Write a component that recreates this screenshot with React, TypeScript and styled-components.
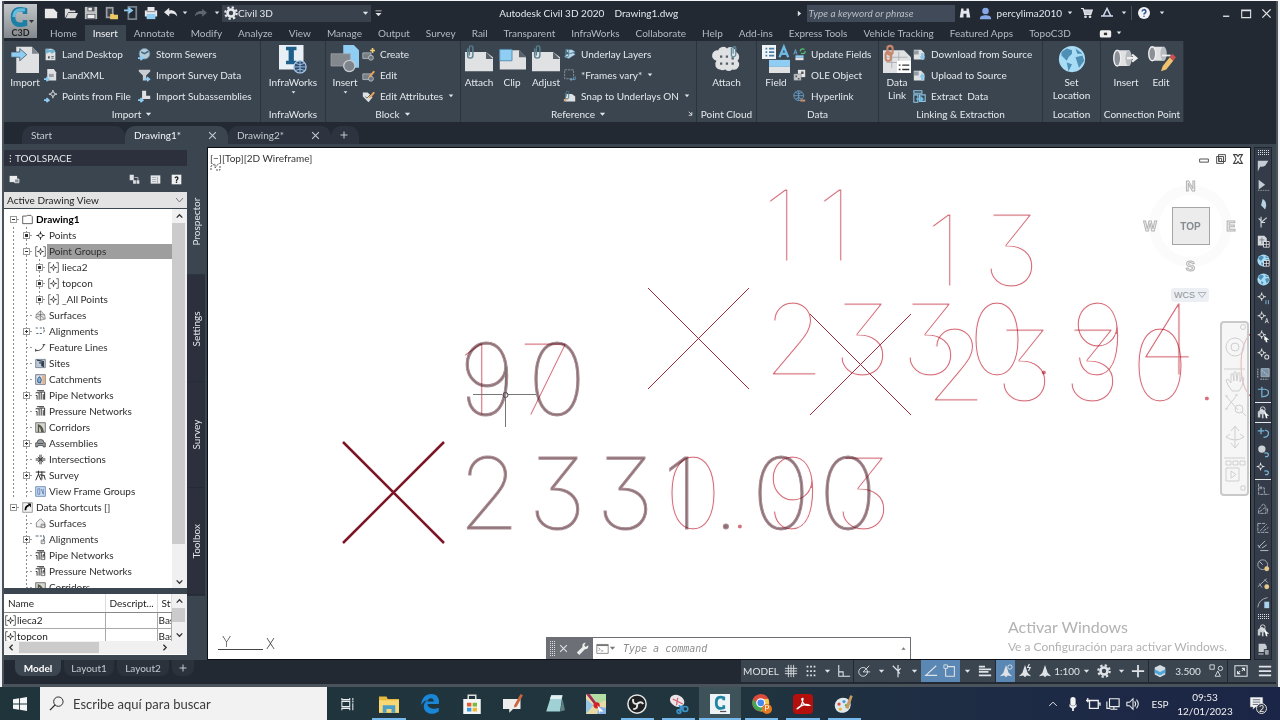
import React from "react";
import styled, { createGlobalStyle, css } from "styled-components";

const C = {
  dark: "#222933",
  panel: "#3b4550",
  edge: "#2b333d",
  text: "#e4e8ec",
  dim: "#b4bac2",
  blue: "#8fcdf2",
  light: "#dfe1e3",
};
const UI = `Lato, "Open Sans", sans-serif`;

const Global = createGlobalStyle`
  * { box-sizing: border-box; }
  body { margin: 0; background: #f2f4f6; font-family: ${UI}; font-size: 10px; line-height: 12px; color: ${C.text}; }
  button, input, select { font: inherit; color: inherit; margin: 0; padding: 0; border: 0; background: none; border-radius: 0; }
  button { display: flex; align-items: center; justify-content: center; white-space: nowrap; }
  svg { display: block; flex: none; overflow: visible; }
  ul { list-style: none; margin: 0; padding: 0; }
  h1, h2 { margin: 0; font-size: 10px; font-weight: 400; }
`;

/* ---------- icons ---------- */

const page = <path d="M2 1h8l4 4v10H2z" fill={C.light} />;
const clip = <path d="M3 4v5a2 2 0 0 0 4 0V3a1.500 1.500 0 0 0-3 0v5" fill="none" stroke="#4f7888" strokeWidth="1.200" />;
const arrowIn = <path d="M0 12.500h5M3 10l3 2.500-3 2.500" fill="none" stroke={C.blue} strokeWidth="2" />;
const pencil = <path d="M9 8l5-6 2 1.500-5 6-3 1z" fill="#e8a45c" />;
const pointMark = (
  <g fill="none" stroke="currentColor">
    <circle cx="8" cy="8" r="3" />
    <path d="M8 2v4M8 10v4M2 8h4M10 8h4" strokeWidth="1.500" />
  </g>
);
const brackets = <path d="M4 1H1v14h3M12 1h3v14h-3" fill="none" stroke="currentColor" />;
const link = <path d="M9 9h5v5H9zM10 12l3-2" fill="#fff" stroke="#333" strokeWidth=".8" />;
const pipes = <path d="M1 4h5v10M1 8h2v6M6 3h3v11M9 3h5v11M12 6v8M3 1h10" fill="none" stroke="currentColor" strokeWidth="1.400" />;
const globe = (
  <g>
    <circle cx="8" cy="8" r="7.500" fill="#a8dcf5" />
    <path d="M2 4l3-2 3 1 0 2-2 2-1 2-3-3zM10 7l4-1 1 3-3 4-1-3zM10 2l4 3-3 0zM5 10l3 1-2 4z" fill="#4d8fb5" />
  </g>
);
const peak = <path d="M8 1l3 9 4 4-5-1-2 2-2-2-5 1 4-4z" fill="currentColor" />;

const art: Record<string, React.ReactNode> = {
  new: <path d="M1 3h10l4 4v7H1z" fill="#e8e8e8" />,
  open: <path d="M1 14V3h5l1 2h6v2H5zM5 8h11l-3 6H2z" fill="#dcdcdc" />,
  save: <g><path d="M1 1h14v14H1z" fill="#bfc0c0" /><path d="M4 1h8v5H4zM3 9h10v6H3z" fill="#50565e" /><path d="M5 2h4v3H5zM4 10h8v4H4z" fill="#eee" /></g>,
  saveAs: <g><path d="M2 1h9v13H2z" fill="#9b9ea2" /><path d="M4 3h5v9H4z" fill="#3b4148" /><path d="M7 9h4l1 1h4v5H7z" fill="#ecc765" /></g>,
  web: <g><path d="M5 1h9v14H5z" fill="none" stroke="#77848f" strokeWidth="2" /><path d="M0 5h7M5 2l4 3-4 3" fill="none" stroke={C.blue} strokeWidth="2" /></g>,
  print: <g><path d="M4 1h8v4H4zM1 5h14v7H1z" fill="#e9e9e9" /><path d="M3 9h10v6H3z" fill={C.blue} /><path d="M3 6h10v1H3z" fill="#7b8188" /></g>,
  undo: <path d="M6 2L0 7l6 5V9c4-1 7 0 9 3 0-5-4-8-9-7z" fill="#e5e7ea" />,
  redo: <path d="M10 2l6 5-6 5V9C6 8 3 9 1 12c0-5 4-8 9-7z" fill="#5d6670" />,
  gear: (
    <g fill="none" stroke="currentColor">
      <circle cx="8" cy="8" r="4" strokeWidth="3" />
      <circle cx="8" cy="8" r="6.500" strokeWidth="2.500" strokeDasharray="2.600 2.500" />
    </g>
  ),
  down: <path d="M2 4h12l-6 7z" fill="currentColor" />,
  right: <path d="M5 3v10l6-5z" fill="currentColor" />,
  up: <path d="M3 11h10L8 5z" fill="currentColor" />,
  downBar: <path d="M1 1h14v2H1zM1 7h14l-7 7z" fill="currentColor" />,
  binoc: <path d="M3 2h3v3h4V2h3l2 12h-5V9H6v5H1z" fill="#e3e6ea" />,
  user: <g fill="#86a8e8"><circle cx="8" cy="5" r="4" /><path d="M1 15c0-4 3-5 7-5s7 1 7 5z" /></g>,
  cart: <g fill="none" stroke="#e3e6ea" strokeWidth="1.600"><path d="M0 2h3l2 8h8l2-6H4" fill="#c9ced6" /><circle cx="6" cy="13" r="1" /><circle cx="12" cy="13" r="1" /></g>,
  tri: <path d="M8 2L3 12h10z M0 12h16" fill="none" stroke="#cfd9f0" strokeWidth="2" />,
  help: <g><circle cx="8" cy="8" r="8" fill="#f0f2f5" /><path d="M5.500 6a2.500 2.500 0 1 1 3.500 2.300c-1 .5-1 1-1 1.700M8 11.500v1.500" fill="none" stroke="#2f4f8f" strokeWidth="2" /></g>,
  min: <path d="M3 12h9" stroke="currentColor" strokeWidth="2" />,
  max: <path d="M1 3h13v11H1zM1 4h13" fill="none" stroke="currentColor" strokeWidth="1.600" />,
  close: <path d="M2 2l12 12M14 2L2 14" stroke="currentColor" strokeWidth="2" />,
  camera: <g><rect x="1" y="4" width="14" height="9" rx="2" fill="#eee" /><path d="M6 7h4v3H6z" fill="#333" /></g>,
  plus: <path d="M8 1v14M1 8h14" stroke="currentColor" strokeWidth="2" />,

  bigImport: <g><path d="M3 1h9l4 4v11H3z" fill={C.light} /><path d="M12 1v4h4" fill="#7d858d" /><path d="M0 4h5V2l4 3.500L5 9V7H0z" fill={C.blue} stroke="#3b4550" strokeWidth=".4" /></g>,
  landDesktop: <g>{page}<path d="M2 2c2-3 4 1 6 0s5-1 6 2l-4 3-3-2-4 2z" fill="#6fb3d3" /><path d="M5 10h2v3H5zM9 10h3v1H9zM9 12h3v1H9z" fill="#4a525a" /></g>,
  landXml: <g><path d="M4 0h8l3 4v10H4z" fill={C.light} /><path d="M6 6h6v4H6z" fill="#9aa1a8" />{arrowIn}</g>,
  pointsFile: <g><path d="M11 0v10M6 5h10" stroke={C.light} strokeWidth="1.500" /><circle cx="11" cy="5" r="2.500" fill="#4a525a" stroke={C.light} />{arrowIn}</g>,
  storm: <g><circle cx="8" cy="7" r="6.500" fill="#b5cbd8" stroke="#6b94ab" /><path d="M4 5l4 2 5-3" stroke="#466b82" fill="none" strokeWidth="2" />{arrowIn}</g>,
  survey: <g><path d="M1 1h14v2L10 8v6H6V8L1 3z" fill="#c9ccd0" /><path d="M8 12.500h5M11 10l3 2.500-3 2.500" fill="none" stroke={C.blue} strokeWidth="2" /></g>,
  subasm: <g><path d="M5 1h5v6h5v4H5z" fill={C.light} />{arrowIn}</g>,
  infra: <g><path d="M0 0h14v14H0z" fill="#e8f0f6" /><path d="M4 1h6v2H8.500v6H10v2H4V9h1.500V3H4z" fill="#1f5f8c" /><circle cx="12" cy="12.500" r="3.500" fill="#2d4d70" stroke="#a9c6e4" strokeWidth=".7" /><path d="M8.500 12.500h7M12 9v7M9.500 10.500q2.500 1.500 5 0M9.500 14.500q2.500-1.500 5 0" stroke="#a9c6e4" strokeWidth=".5" fill="none" /></g>,
  bigInsert: <g><path d="M7 0h6l3 3v10H7z" fill={C.blue} /><path d="M0 5h11v7H0z" fill="#82888e" stroke="#a2a8ae" strokeWidth=".4" /><circle cx="10.500" cy="12" r="3.200" fill="#7d848b" stroke="#c9cdd2" strokeWidth=".7" /></g>,
  create: <g><path d="M1 6h10v7H1z" fill="#777e86" stroke="#b6bcc2" /><circle cx="11" cy="12" r="3" fill="#6d747c" stroke="#c3c8ce" /><path d="M13 0v6M10 3h6" stroke="#f3cf74" strokeWidth="2" /></g>,
  edit: <g><path d="M1 6h10v7H1z" fill="#777e86" stroke="#b6bcc2" /><circle cx="11" cy="12" r="3" fill="#6d747c" stroke="#c3c8ce" />{pencil}</g>,
  attrs: <g><path d="M1 3h6l6 6-5 6-7-7z" fill={C.light} />{pencil}<path d="M4 8l2 2 4-4" stroke="#555" fill="none" /></g>,
  attach: <g><path d="M0 4h12l4 3v8H0z" fill={C.light} /><path d="M12 4v4h4" fill="#59616a" /><path d="M1.500 2v4a1.500 1.500 0 0 0 3 0V1.500a1 1 0 0 0-2 0V6" fill="none" stroke="#587f8e" strokeWidth=".8" /></g>,
  clipRef: <g><path d="M1 3h11l4 4v7H1z" fill={C.light} /><path d="M12 3v4h4" fill="#59616a" /><path d="M1 2.500h7v6.500H1z" fill={C.blue} stroke="#4f88ad" strokeWidth=".5" /></g>,
  under: <g><path d="M3 2h8l4 3-8 2zM3 8l10-2 2 2-8 5-5-2z" fill="#b9d9ec" stroke="#5b88a5" strokeWidth=".5" />{clip}</g>,
  frames: <g fill="none"><path d="M2 1h11v11H2z" stroke="#929aa3" strokeDasharray="3 1" /><path d="M8 13h7v-4M10 15v-4" stroke="#6da8cc" /></g>,
  snap: <g><path d="M3 5h8l4 3v6H3z" fill={C.light} />{clip}<path d="M1 11h3v3H1z" fill="#d5a878" /></g>,
  cloud: <g><path d="M4 14a3 3 0 0 1-2-5 3 3 0 0 1 1-6 3 3 0 0 1 5-1 3 3 0 0 1 5 2 3 3 0 0 1 1 5 3 3 0 0 1-3 5 3 3 0 0 1-4 0 3 3 0 0 1-3 0z" fill={C.light} /><g fill="#555c63"><path d="M4 6h1.300v1.300H4zM7.300 6h1.300v1.300H7.300zM10.600 7h1.300v1.300h-1.300zM4 10h1.300v1.300H4zM7.300 10h1.300v1.300H7.300zM10.600 10h1.300v1.300h-1.300z" /></g><path d="M10.500 1.500v4a1.200 1.200 0 0 0 2.500 0V1.500a.8.8 0 0 0-1.500 0V5" stroke="#5f8b9c" strokeWidth=".7" fill="none" /></g>,
  field: <g><path d="M0 0h8v8H0z" fill="#f2f5f8" /><path d="M2 2h1M4 2h3M2 4h1M4 4h3M2 6h1M4 6h3" stroke="#4b7fa5" /><path d="M10 7l2.500-6L15 7M11 5h3" stroke="#6eb9e4" strokeWidth="1.300" fill="none" /><path d="M4 8.500h12v4H4z" fill={C.blue} /><path d="M4 12.500h12V16H4z" fill={C.light} /></g>,
  update: <g><path d="M1 8l2-6 2 6M2 6h2" stroke="#6eb9e4" fill="none" /><path d="M3 9h10v3H3z" fill={C.blue} /><path d="M3 12h10v3H3z" fill={C.light} /><circle cx="12" cy="4" r="3" fill="none" stroke="#52c06c" strokeWidth="1.500" strokeDasharray="7 2" /></g>,
  ole: <g><path d="M6 1h9v9H6z" fill="#e5e5e5" /><path d="M1 6h9v8H1z" fill="#c4c7cb" stroke="#666" strokeWidth=".5" /><path d="M3 8h2v2H3zM6 11h2v2H6zM10 3h3v3h-3z" fill="#555" /></g>,
  hyper: <g fill="none"><circle cx="7" cy="7" r="6" stroke="#6fa8d3" /><path d="M1 7h12M7 1v12M3 3q4 3 8 0M3 11q4-3 8 0" stroke="#6fa8d3" /><path d="M9 13h6" stroke="#c88f68" strokeWidth="2.500" /></g>,
  dataLink: <g><path d="M0 3h12l4 4v9H0z" fill={C.light} /><path d="M2 7h12M2 10h12M5 4v9M9 4v9" stroke="#a9adb2" strokeWidth=".5" /><rect x="2.500" y=".5" width="3" height="5" rx="1.500" fill="none" stroke="#c9856a" strokeWidth="1.200" /><rect x="1.500" y="4" width="3" height="5" rx="1.500" fill="none" stroke="#c9856a" strokeWidth="1.200" /><path d="M8 9h8v7H8z" fill="#fff" /><path d="M9 11.500h1M11 11.500h4M9 14h1M11 14h4" stroke="#333" strokeWidth=".8" /></g>,
  download: <g><path d="M1 2h9l4 4v8H1z" fill={C.light} /><path d="M1 3h6v5H1z" fill="#959da5" /><path d="M10 6h3v4h2l-3.500 5L8 10h2z" fill="#86c6ec" /></g>,
  upload: <g><path d="M1 2h9l4 4v8H1z" fill={C.light} /><path d="M1 3h6v5H1z" fill="#959da5" /><path d="M10 14h3v-4h2l-3.500-5L8 10h2z" fill="#86c6ec" /></g>,
  extract: <g><path d="M1 1h10v3H1zM1 6h5v9H1zM8 6h7v8H8z" fill="none" stroke="#8fc7e5" strokeWidth="1.300" /><path d="M4 11h7M9 8l3 3-3 3" stroke="#70bfe8" strokeWidth="2" fill="none" /></g>,
  globe,
  pipeIn: <g><path d="M3 3h7v9H3z" fill={C.light} /><ellipse cx="3" cy="7.500" rx="2" ry="4.500" fill="#8b9096" stroke="#eee" strokeWidth=".8" /><ellipse cx="9.500" cy="7.500" rx="1.800" ry="4.500" fill="#b8bbbf" /><path d="M8.500 7.500h5M11.500 5.500l2.500 2-2.500 2" stroke="#eee" fill="none" strokeWidth="1.200" /></g>,
  pipeEdit: <g><path d="M3 1h7v8H3z" fill={C.light} /><ellipse cx="3" cy="5" rx="2" ry="4" fill="#8b9096" stroke="#eee" strokeWidth=".8" /><ellipse cx="9.500" cy="5" rx="1.800" ry="4" fill="#b8bbbf" /><path d="M8.500 6h5" stroke="#eee" /><path d="M9 12l4-5 2 2-4 5-3 1z" fill="#f0c270" /><path d="M13 7l1.500-2 2 2L15 9z" fill="#d05050" /></g>,
  launcher: <path d="M4 4l7 7M11 5v7H4" stroke="currentColor" fill="none" strokeWidth="2" />,

  tsNew: <g><path d="M1 3h12v10H1z" fill="#e9ecef" /><path d="M9 8h7v6H9z" fill="#8e959d" stroke="#fff" /></g>,
  tsPan: <g fill="#dfe3e7"><path d="M1 1h6v8H1zM6 9h4v5H6zM11 9h4v5h-4z" /><path d="M8 5h5v4" stroke="#dfe3e7" fill="none" /></g>,
  tsList: <g><path d="M1 2h14v12H1z" fill="#e7eaed" /><path d="M3 5h6M3 8h6M3 11h6M11 4v9" stroke="#8c939b" /></g>,
  tsHelp: <g><path d="M1 1h14v14H1z" fill="#eef0f2" /><path d="M6 6a2 2 0 1 1 3 2c-1 .5-1 1-1 2M8 11v2" stroke="#222" strokeWidth="2" fill="none" /></g>,

  drawing: <path d="M1 14V3h5l2-1h5l2 2v10z" fill="#fff" stroke="#222" />,
  points: pointMark,
  pgroup: <g>{brackets}<g transform="translate(1.600 1.600) scale(.8)">{pointMark}</g></g>,
  surface: <path d="M8 1l6 6 1 6-8 2-6-4 1-5zM8 1v14M2 6l12 1M8 8l6 5M8 8l-7 3" fill="#e4e4e4" stroke="#555" strokeWidth=".8" />,
  align: <path d="M1 3h4M7 3h3M2 11h3M7 11h3M12 2q3 4 0 8" stroke="#567" fill="none" strokeWidth="1.500" strokeDasharray="3 1" />,
  feature: <path d="M1 12c5 2 11-2 12-9M11 4h4M1 10v4" stroke="#333" fill="none" strokeWidth="1.300" />,
  sites: <g><path d="M1 2h14v12H1z" fill="#bfcad6" stroke="#567" /><path d="M3 3l9 2v8M6 7h4v5" stroke="#2d3c4d" fill="none" strokeWidth="2" /></g>,
  catch: <g><path d="M1 1h14v14H1z" fill="#d9e4f0" stroke="#445" /><path d="M10 2h5v12h-4z" fill="#e2b58c" /><path d="M4 12q-1-7 3-8 4 4 1 9z" fill="#7fb2dd" stroke="#235" /></g>,
  pipes,
  corridor: <g><path d="M1 1h14v14H1z" fill="#d7d9d0" stroke="#444" /><path d="M4 15V3q8 2 9 12h-4q0-5-3-8v8z" fill="#55584a" /></g>,
  assembly: <path d="M3 7q0-5 5-5t5 5h2v6h-3v-2H4v2H1V7zM4 8h8" fill="#9a9ea3" stroke="#333" />,
  inter: <path d="M7 1v14M9 1v14M1 7h14M1 9h14M4 4l8 8M12 4l-8 8" stroke="#333" strokeWidth="1.200" />,
  surveyT: <path d="M1 3h14M5 1v5l-4 9M5 6l4 9M10 2v12M7 7l7 1M13 8l2 6" stroke="#222" strokeWidth="1.400" fill="none" />,
  frameG: <g><path d="M1 1h14v14H1z" fill="#cfe0f5" stroke="#44679c" /><path d="M4 4h3v8H4zM9 4l3 8M12 4v8" stroke="#44679c" fill="none" /></g>,
  shortcut: <g><path d="M1 1h14v14H1z" fill="#f2f2f2" stroke="#777" /><path d="M5 12q0-6 5-7" stroke="#000" strokeWidth="2.500" fill="none" /><path d="M8 2h5v6z" /></g>,
  surface2: <g><path d="M8 1l6 6 1 6H2V7z" fill="#eee" stroke="#555" strokeWidth=".9" />{link}</g>,
  align2: <g><path d="M1 3h4M7 3h3M12 2q3 4 0 7" stroke="#567" fill="none" strokeWidth="1.500" />{link}</g>,
  pipes2: <g>{pipes}{link}</g>,

  mGrid: <path d="M5 1v14M8 1v14M11 1v14M1 5h14M1 8h14M1 11h14" stroke="currentColor" />,
  mDots: <path d="M3 3h2M7 3h2M11 3h2M3 8h2M7 8h2M11 8h2M3 13h2M7 13h2M11 13h2" stroke="currentColor" strokeWidth="2" />,
  mOrtho: <path d="M2 1v13h13M2 9h5v5" fill="none" stroke="currentColor" strokeWidth="1.200" />,
  mPolar: <g fill="none" stroke="currentColor"><circle cx="7" cy="9" r="5" /><path d="M7 9l7-7M7 9h8" /></g>,
  mIso: <path d="M2 2l6 6M8 1v14M11 5l-3 3 2 3" fill="none" stroke="currentColor" strokeWidth="1.300" />,
  mTrack: <path d="M14 2L2 13h13" fill="none" stroke="currentColor" strokeWidth="1.300" />,
  mSnap: <g fill="none" stroke="currentColor"><path d="M3 3h10v11H3z" strokeWidth="1.200" /><path d="M1 1h4v4H1z" fill="#5a87b3" /></g>,
  mLines: <path d="M1 3h7M1 6h14M1 9h11M1 13h14" stroke="currentColor" strokeWidth="2" />,
  mAnn1: <g>{peak}<circle cx="12.500" cy="3.500" r="2.500" fill="none" stroke="currentColor" /></g>,
  mAnn2: <g>{peak}<path d="M13 0l-2 4h3l-2 4" stroke="currentColor" fill="none" strokeWidth="1.300" /></g>,
  mAnn3: peak,
  mLayers: <g><path d="M8 1l6 3v8l-6 3-6-3V4z" fill="#d5dde4" /><path d="M2 6l6 3 6-3v4l-6 3-6-3z" fill="#4fa8dc" /></g>,
  mIsol: <g fill="none" stroke="currentColor"><path d="M1 1h5v5H1zM7 14l3-6 3 6z" /><circle cx="13" cy="5" r="2.500" /></g>,
  mFull: <path d="M1 2h14v12H1zM4 11l3-3M4 8v3h3M12 5L9 8M9 5h3v3" fill="none" stroke="currentColor" strokeWidth="1.200" />,
  menu: <path d="M1 3h14M1 8h14M1 13h14" stroke="currentColor" strokeWidth="2" />,

  r1: <path d="M1 1h13l-4 6q-3 2-6 1L1 14z" fill="#c5ccd4" />,
  r2: <g><path d="M2 1l8 6-8 6z" fill="#c5ccd4" /><path d="M1 14h14" stroke="#9aa3ad" strokeDasharray="2 1" /></g>,
  r3: <path d="M7 1q7 5 3 13L5 9z" fill="#b5d3e2" />,
  r4: <path d="M5 1v13M5 8l7-6M5 6L2 3M5 8h5" stroke="#cfd5db" fill="none" strokeWidth="1.400" />,
  r5: <g><path d="M1 1h8l3 3v9H1z" fill="#d5d9dd" /><path d="M3 6h6M6 3v8" stroke="#6e767f" /><path d="M8 8h7v7H8zM8 11.500h7M11.500 8v7" fill="#222933" stroke="#eee" /></g>,
  r6: <g>{globe}<path d="M8 8h7v7H8zM8 11.500h7M11.500 8v7" fill="#222933" stroke="#eee" /></g>,
  r8: <g color="#eee"><g transform="translate(-1 -1) scale(.85)">{pointMark}</g><path d="M11 10v5M14 10v5" stroke="#8fcdf2" /></g>,
  r9: <g color="#eee"><g transform="translate(-1 -1) scale(.85)">{pointMark}</g><path d="M10 15l2-6 2 6M11 13h2" stroke="#ddd" fill="none" /></g>,
  r10: <g color="#eee"><g transform="translate(-1 -1) scale(.85)">{pointMark}</g><path d="M9 7l6 5-3 0 1 3-2 0-1-3-1 1z" fill="#fff" /></g>,
  r11: <g color="#eee"><g transform="translate(-1 -1) scale(.85)">{pointMark}</g><circle cx="12" cy="11" r="2.500" fill="none" stroke="#ddd" strokeWidth="1.300" /></g>,
  r12: <g><path d="M5 2h10v10H5z" fill="#7992a5" stroke="#aebbc6" /><path d="M1 2v12M4 15h10M6 4l8 7" stroke="#cfd5db" strokeDasharray="2 1" /></g>,
  r13: <path d="M1 4h9q5 1 4 5t-7 4M6 1v13" stroke="#79b6d8" fill="none" strokeWidth="1.500" />,
  r14: <g><path d="M1 7l5-4 5 4v3H8v5H6v-5H4v4H1z" fill="#c7ccd2" /><circle cx="7" cy="4" r="3" fill="none" stroke="#eee" /><path d="M9 7l6 5-3 0 1 3-2 0z" fill="#fff" /></g>,
  r15: <path d="M1 6h8M5 2v8M10 5q5 1 4 5t-6 4" stroke="#79b6d8" fill="none" strokeWidth="1.500" />,
  r16: <g><circle cx="6" cy="5" r="4.500" fill="#cdd2d7" /><path d="M9 10q5-1 5 2t-4 2" stroke="#79b6d8" fill="none" strokeWidth="1.500" /></g>,
  r17: <g color="#eee"><g transform="translate(-2 -2) scale(.8)">{pointMark}</g><path d="M9 10q5-1 5 2t-4 2" stroke="#79b6d8" fill="none" strokeWidth="1.500" /></g>,
  r18: <path d="M2 1v13h13M2 6h7v8M5 4v4" stroke="#b7bec6" fill="none" strokeDasharray="4 1" />,
  r19: <path d="M2 14V9l6-7 3 4v8H2M3 12l8-6M13 8v6" stroke="#b7bec6" fill="none" strokeDasharray="4 1" />,
  r20: <path d="M1 3v11h14M1 3h9M4 12l8-8M8 12l6-4" stroke="#b7bec6" fill="none" strokeDasharray="4 1" />,
  r21: <path d="M2 9l8-8M4 13h10M6 10l6-4M1 6l3 4" stroke="#b7bec6" fill="none" strokeWidth="1.200" />,
  r22: <g><circle cx="7" cy="7" r="6" stroke="#b7bec6" fill="none" /><path d="M7 7L3 3" stroke="#ddd" /><circle cx="12" cy="12" r="3" fill="#e9c98a" /></g>,
  r23: <g><path d="M1 12L12 2M3 8l3 5M9 3l4 4" stroke="#b7bec6" fill="none" /><circle cx="12" cy="12" r="3" fill="#e9c98a" /></g>,
  r24: <g><path d="M1 14Q2 4 13 2" stroke="#b7bec6" fill="none" /><path d="M9 7h6v8H9z" fill="#a9d3ec" /></g>,
  r26: <g><path d="M2 1h8l2 3v7H2z" fill="#c7ccd2" /><path d="M1 12h8v3H1zM9 8h6v7H9z" fill="#9aa3ac" stroke="#222933" /></g>,

  win: <path d="M0 2.500l7-1v6H0zM8 1.300L16 0v7.500H8zM0 8.500h7v6l-7-1zM8 8.500h8V16l-8-1.300z" fill="#f4f6f7" />,
  search: <g fill="none" stroke="#222"><circle cx="10" cy="6" r="5" /><path d="M6.500 9.500L1 15" strokeWidth="1.300" /></g>,
  task: <path d="M1 1v2h9V1M1 5h9v6H1zM1 15v-2h9v2M13.500 1v3M13.500 7v8M12.500 5.500h2" fill="none" stroke="#e9edef" strokeWidth="1.200" />,
  folder: <g><path d="M0 2h6l1 2h9v11H0z" fill="#e8b83f" /><path d="M0 5h16v10H0z" fill="#f8d775" /><path d="M3 9h10v6h-3v-3H6v3H3z" fill="#4b9fc9" /></g>,
  edge: <path d="M1 9C1 3 5 0 9 0c5 0 7 4 6 8H6c0 3 5 5 9 3v3c-6 4-12 1-12-4 0-2 1-4 3-5-3 0-5 4-5 4zm5-3h5c0-4-5-3-5 0z" fill="#1a86d8" fillRule="evenodd" />,
  store: <g><path d="M1 4h14v12H1z" fill="#f4f5f5" /><path d="M5 4V1h6v3" stroke="#ddd" fill="none" strokeWidth="1.200" /><path d="M4 7h3.500v3H4z" fill="#e65a35" /><path d="M8.500 7H12v3H8.500z" fill="#7eb83c" /><path d="M4 11h3.500v3H4z" fill="#3b9ade" /><path d="M8.500 11H12v3H8.500z" fill="#f2b92f" /></g>,
  chat: <g><path d="M0 4h14v8H8l-3 3v-3H0z" fill="#f0eeec" /><path d="M9 9l5-9 2 1-5 9-2 1z" fill="#c9643d" /></g>,
  note: <g><path d="M5 1h9l-2 13H1z" fill="#9fd1d5" /><path d="M5 1h9l-1 3H4z" fill="#e2eef0" /><path d="M12 14l2-10 2 9z" fill="#5f7f87" /></g>,
  mapApp: <g><path d="M0 0h16v16H0z" fill="#e9dba5" /><path d="M0 4l6 5-6 7z" fill="#96c6e4" /><path d="M3 0h13v5L9 8z" fill="#b3dfa4" /><path d="M0 0h3l6 8-1 2z" fill="#a3305a" /><path d="M10 10l6 1v5H9z" fill="#8ab4e6" /><circle cx="8.500" cy="9" r="2.500" fill="#d2222a" /><path d="M9 9l5 5-3 0 0 2z" fill="#fff" /></g>,
  obs: <g><circle cx="8" cy="8" r="7.300" fill="#1f2022" stroke="#e6e6e6" strokeWidth="1.200" /><path d="M8 8q-4 0-3-4M8 8q3-3 5 0M8 8q1 4-3 4" stroke="#e6e6e6" fill="none" strokeWidth="1.600" /></g>,
  snip: <g><ellipse cx="6.500" cy="5.500" rx="6" ry="4.500" fill="#ece5e8" transform="rotate(25 6.500 5.500)" /><path d="M3 4l8 4M7 3L6 9" stroke="#d16075" /><path d="M8 9l4 5M11 9l-3 5" stroke="#3c93c7" strokeWidth="1.500" /><circle cx="13" cy="12" r="2" fill="none" stroke="#3c93c7" strokeWidth="1.300" /><circle cx="8" cy="14" r="1.500" fill="none" stroke="#3c93c7" strokeWidth="1.300" /></g>,
  civil: <g><path d="M0 0h16v16H0z" fill="#eef3f5" /><path d="M11 5V3Q5 1 5 7t6 4V9" stroke="#2184a5" strokeWidth="2.200" fill="none" /><path d="M8 13.500h5v1H8z" fill="#555" /></g>,
  chrome: <g><circle cx="7" cy="7" r="7" fill="#dd4b3c" /><path d="M1 4a7 7 0 0 0 6 10l3-5H5z" fill="#3fa757" /><path d="M7 14a7 7 0 0 0 6-10H7l3 5z" fill="#f6c545" /><circle cx="7" cy="7" r="3.200" fill="#4688f1" stroke="#fff" /><circle cx="12" cy="12" r="4" fill="#e37a1f" /></g>,
  acro: <g><rect width="16" height="16" rx="3" fill="#b3100d" /><path d="M3 12q4-1 5-8 0-1-1 0 1 6 6 5-4-2-10 3z" stroke="#fff" fill="none" strokeWidth="1.100" /></g>,
  paint: <g><ellipse cx="7" cy="9" rx="6.500" ry="6" fill="#dfe8ec" transform="rotate(-20 7 9)" /><circle cx="4" cy="8" r="1.300" fill="#d94b3d" /><circle cx="8" cy="6" r="1.300" fill="#4b9be0" /><circle cx="10" cy="9" r="1.300" fill="#5ab04f" /><circle cx="5" cy="12" r="1.300" fill="#e9b93b" /><path d="M9 11l4-10 2 .5L11.500 12z" fill="#c69a60" /></g>,
  chevUp: <path d="M2 11l6-6 6 6" stroke="#eee" fill="none" strokeWidth="1.500" />,
  mic: <g fill="#f4f4f4"><rect x="5" y="0" width="6" height="10" rx="3" /><path d="M4 8q4 5 8 0v3l-3 2v3H7v-3l-3-2z" /></g>,
  batt: <path d="M4 4h10v9H4zM14 7h2v3M2 1v5M0 4h4" stroke="#eee" fill="none" strokeWidth="1.500" />,
  net: <path d="M4 2h11v9H4zM9 11v3M5 14h8M1 5v8h4" stroke="#eee" fill="none" strokeWidth="1.300" />,
  vol: <path d="M1 6h3l4-4v12l-4-4H1zM10 5q2 3 0 6M12 3q4 5 0 10" stroke="#eee" fill="none" strokeWidth="1.200" />,
  notif: <path d="M1 1h14v11H7l-3 3v-3H1zM4 4h8M4 6.500h8M4 9h6" fill="#f3f3f3" stroke="#1b2947" strokeWidth=".7" />,
  wrench: <path d="M1 13l7-7q-1-4 3-5l1 0-2 3 2 2 3-2q1 5-4 5l-7 7z" fill="#eee" />,
  prompt: <g><path d="M1 3h14v11H1z" fill="#fff" stroke="#777" /><path d="M1 4h14" stroke="#777" strokeWidth="2" /><path d="M3 7l2 2-2 2M6 11h3" stroke="#777" fill="none" /></g>,
  vMin: <path d="M1 8h14v5H1z" fill="none" stroke="#555" strokeWidth="1.600" />,
  vMax: <path d="M4 1h11v11H4zM1 4h11v11H1zM5 7h4v5H5z" fill="none" stroke="#444" strokeWidth="1.500" />,
  vClose: <path d="M1 1h5l2 3 2-3h5l-4 7 4 7h-5l-2-3-2 3H1l4-7z" fill="none" stroke="#444" strokeWidth="1.700" />,
  scUp: <path d="M3 10l5-5 5 5" fill="none" stroke="#333" strokeWidth="2.400" />,
  scDown: <path d="M3 6l5 5 5-5" fill="none" stroke="#333" strokeWidth="2.400" />,
  scLeft: <path d="M10 3L5 8l5 5" fill="none" stroke="#333" strokeWidth="2.400" />,
  scRight: <path d="M6 3l5 5-5 5" fill="none" stroke="#333" strokeWidth="2.400" />,
};

const Icon = ({ n, s = 12 }: { n: string; s?: number }) => (
  <svg width={s} height={s} viewBox="0 0 16 16" aria-hidden="true">{art[n]}</svg>
);

/* ---------- window frame ---------- */

const Screen = styled.div`
  min-height: 100vh;
  display: flex;
  flex-direction: column;
`;
const AppWindow = styled.div`
  flex: 1;
  display: flex;
  flex-direction: column;
  margin: 1px 2px 0;
  border: solid #4a525c;
  border-width: 0 2px 3px;
  background: ${C.dark};
`;
const Header = styled.header`
  display: flex;
  height: 40px;
`;
const AppButton = styled.button`
  width: 33px;
  height: 34px;
  margin: 3px 0 0;
  background: linear-gradient(#c3c7ca, #83898e);
  color: #222;
  align-self: flex-start;
  flex-direction: column;
  font-weight: 700;
  font-size: 9px;
  line-height: 9px;
`;
const HeaderRows = styled.div`
  flex: 1;
  min-width: 0;
`;
const TitleRow = styled.div`
  display: flex;
  align-items: center;
  height: 24px;
`;
const IconButton = styled.button<{ $w?: number; $c?: string }>`
  width: ${(p) => p.$w ?? 20}px;
  height: 20px;
  flex: none;
  color: ${(p) => p.$c ?? C.light};
`;
const QuickBar = styled.div`
  display: flex;
  margin-left: 4px;
`;
const WindowButtons = styled.div`
  display: flex;
  margin-left: 48px;
`;
const Workspace = styled.label`
  display: flex;
  align-items: center;
  width: 149px;
  height: 17px;
  padding: 0 2px;
  background: #39414d;
  svg + select { flex: 1; }
`;
const PlainSelect = styled.select`
  appearance: none;
  min-width: 0;
  outline: 0;
`;
const Title = styled.h1`
  flex: 1;
  text-align: center;
  white-space: pre;
`;
const Search = styled.input`
  width: 148px;
  height: 17px;
  padding: 0 2px;
  background: #414a58;
  font-style: italic;
  &::placeholder { color: #b9bfc8; opacity: 1; }
`;
const User = styled.button`
  gap: 5px;
  height: 20px;
  padding-left: 4px;
`;
const Rule = styled.span`
  width: 1px;
  height: 14px;
  background: #4a525c;
`;
const RibbonTabs = styled.nav`
  display: flex;
  align-items: stretch;
  height: 16px;
  padding-left: 5px;
`;
const RibbonTab = styled.button<{ $on?: boolean }>`
  padding: 0 8px;
  color: ${(p) => (p.$on ? "#f2f4f6" : C.dim)};
  background: ${(p) => (p.$on ? C.panel : "none")};
`;
const RibbonToggle = styled.button`
  gap: 4px;
  margin-left: 20px;
`;

/* ---------- ribbon ---------- */

const Ribbon = styled.div`
  display: flex;
  height: 81px;
`;
const Panel = styled.section<{ $w: number }>`
  display: flex;
  flex-direction: column;
  width: ${(p) => p.$w}px;
  flex: none;
  background: ${C.panel};
  border-right: 1px solid ${C.edge};
`;
const PanelBody = styled.div`
  display: flex;
  flex: 1;
  padding: 3px 2px 0;
`;
const PanelTitle = styled.h2`
  position: relative;
  display: flex;
  align-items: center;
  justify-content: center;
  gap: 4px;
  height: 16px;
  white-space: nowrap;
`;
const Launcher = styled.button`
  position: absolute;
  right: 2px;
  top: 4px;
`;
const BigButton = styled.button<{ $w: number }>`
  flex-direction: column;
  justify-content: flex-start;
  width: ${(p) => p.$w}px;
  flex: none;
  padding-top: 1px;
  line-height: 13px;
  svg { margin-bottom: 3px; }
  svg + svg, span + svg { margin: 1px 0 0; }
`;
const Stack = styled.div<{ $w: number }>`
  display: grid;
  grid-template-rows: repeat(3, 20px);
  row-gap: 1px;
  width: ${(p) => p.$w}px;
  flex: none;
`;
const SmallButton = styled.button`
  justify-content: flex-start;
  gap: 5px;
  white-space: pre;
`;

type Row = [string, string, boolean?];
const Small = ({ w, rows }: { w: number; rows: Row[] }) => (
  <Stack $w={w}>
    {rows.map(([i, label, drop]) => (
      <SmallButton key={label}><Icon n={i} s={13} />{label}{drop && <Icon n="down" s={6} />}</SmallButton>
    ))}
  </Stack>
);
const Big = ({ w, icon, lines, drop }: { w: number; icon: string; lines: string[]; drop?: boolean }) => (
  <BigButton $w={w}>
    <Icon n={icon} s={28} />
    {lines.map((l) => <span key={l}>{l}</span>)}
    {drop && <Icon n="down" s={5} />}
  </BigButton>
);

/* ---------- document tabs ---------- */

const FileTabs = styled.div`
  display: flex;
  align-items: flex-end;
  height: 25px;
  padding-left: 18px;
  border-bottom: 3px solid ${C.panel};
`;
const FileTab = styled.div<{ $w: number; $on?: boolean }>`
  display: flex;
  align-items: center;
  justify-content: space-between;
  width: ${(p) => p.$w}px;
  height: 18px;
  padding: 0 11px 0 9px;
  border-radius: 10px 10px 0 0;
  color: ${(p) => (p.$on ? "#f2f4f6" : "#c4c9cf")};
  background: ${(p) => (p.$on ? C.panel : "#2d343f")};
  button { color: #c4c9cf; }
`;

/* ---------- toolspace ---------- */

const Main = styled.main`
  display: flex;
  flex: 1;
  min-height: 400px;
  background: ${C.panel};
`;
const Toolspace = styled.aside`
  display: flex;
  flex-direction: column;
  width: 183px;
  flex: none;
  padding: 3px 0 5px;
  color: #1c1c1c;
`;
const ToolHead = styled.div`
  display: flex;
  align-items: center;
  gap: 3px;
  height: 16px;
  padding-left: 5px;
  background: #2b303c;
  color: ${C.text};
`;
const ToolIcons = styled.div`
  display: flex;
  align-items: center;
  height: 26px;
  span { flex: 1; }
`;
const ViewSelect = styled.label`
  display: flex;
  align-items: center;
  height: 16px;
  padding: 0 4px 0 3px;
  background: #e3e3e3;
  select { flex: 1; }
`;
const TreeBox = styled.div`
  display: flex;
  flex: 1 1 0;
  min-height: 0;
  margin: 1px 0 6px;
  background: #fff;
  overflow: hidden;
`;
const Tree = styled.ul`
  flex: 1;
  height: 0;
  padding: 2px 0 0 3px;
`;
const TreeRow = styled.li<{ $bold?: boolean }>`
  display: flex;
  align-items: center;
  height: 16px;
  color: #2e2e2e;
  ${(p) => p.$bold && css`font-weight: 700; color: #000;`}
`;
const Guide = styled.span<{ $line?: boolean; $tee?: boolean }>`
  display: flex;
  align-items: center;
  justify-content: center;
  width: 13px;
  height: 16px;
  flex: none;
  background-image:
    ${(p) => (p.$line ? "repeating-linear-gradient(#8b8b8b 0 2px, transparent 2px 4px)" : "none")},
    ${(p) => (p.$tee ? "repeating-linear-gradient(90deg, #9b9b9b 0 2px, transparent 2px 4px)" : "none")};
  background-size: 1px 16px, 7px 1px;
  background-position: 6px 0, 6px 8px;
  background-repeat: no-repeat;
`;
const Expander = styled.button`
  width: 7px;
  height: 7px;
  background: #fff;
  border: 1px solid #9a9a9a;
  color: #333;
`;
const TreeIcon = styled.span`
  width: 14px;
  flex: none;
  display: flex;
  justify-content: center;
`;
const TreeLabel = styled.span<{ $on?: boolean }>`
  flex: 1;
  padding-left: 2px;
  line-height: 15px;
  white-space: nowrap;
  background: ${(p) => (p.$on ? "#9e9e9e" : "none")};
`;
const ScrollBar = styled.div<{ $row?: boolean }>`
  display: flex;
  flex-direction: ${(p) => (p.$row ? "row" : "column")};
  ${(p) => (p.$row ? "height: 13px;" : "width: 15px;")}
  flex: none;
  align-items: center;
  background: #f0f0f0;
  button { width: 15px; height: 14px; }
`;
const Thumb = styled.span<{ $grow: number; $row?: boolean }>`
  flex: ${(p) => p.$grow} 1 0;
  align-self: stretch;
  margin: ${(p) => (p.$row ? "1px 0" : "0 2px 0 0")};
  background: #cbcbcb;
`;
const Gap = styled.span<{ $grow: number }>`
  flex: ${(p) => p.$grow} 1 0;
`;
const ListBox = styled.div`
  display: flex;
  flex-direction: column;
  height: 61px;
  background: #fff;
  overflow: hidden;
`;
const ListTop = styled.div`
  display: flex;
  height: 47px;
  overflow: hidden;
`;
const ListClip = styled.div`
  flex: 1;
  min-width: 0;
  overflow: hidden;
`;
const List = styled.table`
  width: 100%;
  table-layout: fixed;
  border-collapse: collapse;
  th, td { height: 16px; padding: 0 4px; text-align: left; font-weight: 400; white-space: nowrap; overflow: hidden; border: 1px solid #a9a9a9; border-left: 0; }
  th { height: 18px; border-color: #ddd; border-top: 0; border-bottom-color: #888; }
  td { padding: 0 1px; }
`;
const NameCell = styled.span`
  display: flex;
  align-items: center;
  gap: 1px;
`;
const SideTabs = styled.div`
  display: flex;
  flex-direction: column;
  width: 18px;
  height: 448px;
  flex: none;
  margin-right: 2px;
  padding-top: 22px;
`;
const SideTab = styled.button<{ $on?: boolean }>`
  flex: 1;
  writing-mode: vertical-rl;
  transform: rotate(180deg);
  color: ${C.text};
  background: ${(p) => (p.$on ? C.panel : "#2b303c")};
  border-top: 1px solid #20262f;
`;

/* ---------- drawing area ---------- */

const Canvas = styled.div`
  position: relative;
  flex: 1;
  min-width: 0;
  background: #fff;
  border: 1px solid #0c0f13;
  overflow: hidden;
  color: #333;
`;
const Model = styled.svg`
  position: absolute;
  inset: 0;
`;
/* Hairline labels: the white outline trims the strokes, and multiply keeps it off the lines beneath. */
const PointLabel = styled.text<{ $picked?: boolean }>`
  font-family: Inter, sans-serif;
  font-size: 99px;
  font-weight: 100;
  font-feature-settings: "cv09";
  text-anchor: middle;
  mix-blend-mode: multiply;
  fill: ${(p) => (p.$picked ? "#8b6f75" : "#d6707c")};
  stroke: ${(p) => (p.$picked ? "#a98d93" : "#fff")};
  stroke-width: 1px;
`;
const AxisLabel = styled.text`
  font-family: Inter, sans-serif;
  font-size: 14px;
  font-weight: 200;
  fill: #333;
`;
const ViewLabel = styled.div`
  position: absolute;
  top: 4px;
  left: 2px;
`;
const ViewButtons = styled.div`
  position: absolute;
  top: 1px;
  right: 4px;
  display: flex;
`;
const Cube = styled.div`
  position: absolute;
  top: 29px;
  right: 10px;
  width: 99px;
  height: 98px;
  display: grid;
  grid-template: 18px 1fr 18px / 18px 1fr 18px;
  place-items: center;
  font: 700 14px "Liberation Sans", sans-serif;
  color: #f2f2f2;
  -webkit-text-stroke: 1px #b4b4b4;
  &::before { content: ""; position: absolute; inset: 8px; border: 10px solid #fbfbfb; border-radius: 50%; z-index: 0; }
  > * { z-index: 1; }
`;
const Top = styled.button`
  width: 38px;
  height: 38px;
  border: 1px solid #a5a5a5;
  background: #ececec;
  color: #858b90;
  font: 700 10px "Liberation Sans", sans-serif;
  -webkit-text-stroke: 0;
`;
const Wcs = styled.button`
  position: absolute;
  top: 140px;
  right: 41px;
  width: 38px;
  height: 14px;
  gap: 3px;
  border-radius: 3px;
  background: #eceff3;
  color: #8e9298;
  font-family: "Liberation Sans", sans-serif;
  font-size: 9px;
`;
const NavBar = styled.div`
  position: absolute;
  top: 173px;
  right: 1px;
  width: 29px;
  height: 175px;
  border: 2px solid #c9c9c9;
  border-radius: 4px;
  background: rgba(240, 240, 240, 0.6);
`;
const Watermark = styled.div`
  position: absolute;
  right: 23px;
  bottom: 3px;
  color: #b2b2b2;
  font-size: 12px;
  line-height: 18px;
  strong { display: block; font-size: 16px; font-weight: 400; line-height: 22px; }
`;
const CommandBar = styled.div`
  position: absolute;
  left: 338px;
  bottom: 0;
  width: 365px;
  height: 22px;
  display: flex;
  align-items: center;
  background: #fff;
  border: 1px solid #6c7076;
  border-bottom: 0;
`;
const CommandGrip = styled.div`
  display: flex;
  align-items: center;
  align-self: stretch;
  width: 46px;
  background: #6c7076;
  color: #f2f2f2;
`;
const Dots = styled.span<{ $row?: boolean }>`
  width: ${(p) => (p.$row ? 11 : 5)}px;
  height: ${(p) => (p.$row ? 5 : 15)}px;
  margin: ${(p) => (p.$row ? "2px auto" : "0 0 0 3px")};
  flex: none;
  background-image: conic-gradient(from 270deg at 1px 1px, #dcdfe2 90deg, transparent 0);
  background-size: 2px 2px;
`;
const CommandInput = styled.input`
  flex: 1;
  min-width: 0;
  padding-left: 4px;
  font: italic 10px "DejaVu Sans Mono", monospace;
  &::placeholder { color: #8e8e8e; opacity: 1; }
`;
const SideBar = styled.div`
  display: flex;
  flex-direction: column;
  width: 18px;
  flex: none;
  margin: 0 4px 0 3px;
  background: #333c48;
  border: 1px solid #1f262f;
  button { flex: 1; min-height: 0; color: #eee; }
`;
const Divider = styled.span`
  height: 1px;
  background: #e6e8ea;
`;

/* ---------- status bar ---------- */

const Status = styled.footer`
  display: flex;
  height: 24px;
  background: ${C.dark};
`;
const LayoutTab = styled.button<{ $on?: boolean; $w: number }>`
  width: ${(p) => p.$w}px;
  height: 16px;
  border-radius: 0 0 8px 8px;
  background: ${(p) => (p.$on ? "#3c4651" : "#2b323c")};
  color: ${(p) => (p.$on ? "#fff" : "#c4c9cf")};
  font-weight: ${(p) => (p.$on ? 700 : 400)};
`;
const LayoutTabs = styled.div`
  display: flex;
  gap: 3px;
  flex: 1;
  padding-left: 11px;
`;
const StatusCell = styled.button<{ $w: number; $on?: boolean; $sep?: boolean }>`
  width: ${(p) => p.$w}px;
  height: 22px;
  flex: none;
  color: #dfe3e7;
  background: ${(p) => (p.$on ? "#5a87b3" : C.panel)};
  border-right: ${(p) => (p.$sep ? "1px solid #222933" : "0")};
`;

/* ---------- taskbar ---------- */

const Taskbar = styled.div`
  display: flex;
  height: 33px;
  background: linear-gradient(90deg, #1f343b, #20353d 55%, #1e2c44 75%, #1b2547);
`;
const Start = styled.button`
  width: 40px;
`;
const TaskSearch = styled.label`
  display: flex;
  align-items: center;
  gap: 9px;
  width: 287px;
  padding-left: 9px;
  background: #f2f2f2;
  color: #2a2a2a;
  font-size: 13px;
  input { flex: 1; outline: 0; }
  input::placeholder { color: #3a3a3a; opacity: 1; }
`;
const TaskApps = styled.div`
  display: grid;
  grid-template-columns: repeat(13, 1fr);
  width: 538px;
`;
const TaskApp = styled.button<{ $open?: boolean; $on?: boolean }>`
  position: relative;
  background: ${(p) => (p.$on ? "#3d5359" : "none")};
  ${(p) => p.$open && css`
    &::after { content: ""; position: absolute; left: ${p.$on ? 0 : 4}px; right: ${p.$on ? 0 : 4}px; bottom: 0; height: 2px; background: #76b9ed; }
  `}
`;
const Profile = styled.span`
  position: absolute;
  left: 21px;
  top: 17px;
  width: 10px;
  color: #fff;
  font-size: 8px;
  line-height: 9px;
`;
const Tray = styled.div`
  display: flex;
  align-items: center;
  margin-left: auto;
  color: #f0f0f0;
`;
const Clock = styled.div`
  width: 56px;
  text-align: center;
  line-height: 14px;
`;
const Notice = styled.button`
  position: relative;
  width: 47px;
  span { position: absolute; left: 23px; top: 7px; width: 11px; border: 1px solid #ddd; border-radius: 50%; background: #2b3242; font-size: 9px; line-height: 9px; }
`;

/* ---------- data ---------- */

const ribbonTabs = ["Home", "Insert", "Annotate", "Modify", "Analyze", "View", "Manage", "Output", "Survey", "Rail", "Transparent", "InfraWorks", "Collaborate", "Help", "Add-ins", "Express Tools", "Vehicle Tracking", "Featured Apps", "TopoC3D"];

type Node = { t: string; l: number; e?: "+" | "-" | "."; i: string; trunk?: boolean; on?: boolean };
const n = (t: string, l: number, i: string, e?: Node["e"], trunk = true): Node => ({ t, l, i, e, trunk, on: t === "Point Groups" });
const tree: Node[] = [
  n("Drawing1", 0, "drawing", "-"),
  n("Points", 1, "points", "."),
  n("Point Groups", 1, "pgroup", "-"),
  n("lieca2", 2, "pgroup", "."),
  n("topcon", 2, "pgroup", "."),
  n("_All Points", 2, "pgroup", "."),
  n("Surfaces", 1, "surface"),
  n("Alignments", 1, "align", "+"),
  n("Feature Lines", 1, "feature"),
  n("Sites", 1, "sites"),
  n("Catchments", 1, "catch"),
  n("Pipe Networks", 1, "pipes", "+"),
  n("Pressure Networks", 1, "pipes"),
  n("Corridors", 1, "corridor"),
  n("Assemblies", 1, "assembly", "+"),
  n("Intersections", 1, "inter"),
  n("Survey", 1, "surveyT", "+"),
  n("View Frame Groups", 1, "frameG"),
  n("Data Shortcuts []", 0, "shortcut", "-"),
  n("Surfaces", 1, "surface2", undefined, false),
  n("Alignments", 1, "align2", "+", false),
  n("Pipe Networks", 1, "pipes2", undefined, false),
  n("Pressure Networks", 1, "pipes2", undefined, false),
  n("Corridors", 1, "corridor", undefined, false),
];

const sign = { "+": "M1 2.500h3M2.500 1v3", "-": "M1 2.500h3", ".": "M1 1h3v3H1z" };

const sideTools = [
  ["r1", "r2", "r3", "r4", "r5", "r6", "globe", "r8", "r9", "r10", "r11", "r12", "r13"],
  ["r14"],
  ["r15", "r16", "r17"],
  ["r18", "r19", "r20", "r21", "r22", "r23", "r24"],
];

type Cell = [string, number, ("on" | "sep" | "text" | "drop")?];
const statusCells: Cell[] = [
  ["MODEL", 40, "text"], ["mGrid", 20], ["mDots", 19], ["d1", 15, "drop"], ["mOrtho", 19, "sep"], ["mPolar", 20], ["d2", 14, "drop"],
  ["mIso", 19], ["d3", 14, "drop"], ["mTrack", 19, "on"], ["mSnap", 20, "on"], ["d4", 14, "drop"], ["mLines", 22, "sep"],
  ["mAnn1", 19, "on"], ["mAnn2", 20], ["mAnn3", 19], ["1:100", 26, "text"], ["d5", 13, "drop"], ["gear", 22], ["d6", 12, "drop"],
  ["plus", 22, "sep"], ["mLayers", 22], ["3.500", 34, "text"], ["mIsol", 23, "sep"], ["mFull", 26], ["menu", 22],
];

const taskApps: [string, string, boolean?][] = [
  ["Vista de tareas", "task"], ["Explorador", "folder", true], ["Edge", "edge"], ["Store", "store"], ["Chat", "chat"], ["Notas", "note"], ["Mapas", "mapApp"],
  ["OBS", "obs", true], ["Recortes", "snip", true], ["Civil 3D", "civil", true], ["Chrome", "chrome", true], ["Acrobat", "acro", true], ["Paint", "paint", true],
];

/* Labels of the survey points: the centre of each digit, then the baseline. */
const pointLabels: { t: string; x: number[]; y: number; picked?: boolean }[] = [
  { t: "11", x: [781, 835], y: 261 },
  { t: "2330.94", x: [794, 862, 930, 997, 1044, 1098, 1167], y: 375 },
  { t: "13", x: [944, 1011], y: 286 },
  { t: "2330.0", x: [956, 1024, 1092, 1160, 1207, 1262], y: 401 },
  { t: "17", x: [476, 545], y: 415 },
  { t: "0.93", x: [693, 740, 793, 863], y: 529 },
  { t: "90", x: [487, 557], y: 415, picked: true },
  { t: "2331.00", x: [489, 557, 625, 681, 726, 781, 848], y: 529, picked: true },
];

const DrawingArea = () => (
  <Canvas>
    <Model width="100%" height="100%">
      <g transform="translate(-208 -148)">
        {pointLabels.map((p) => <PointLabel key={p.t} x={p.x.join(" ")} y={p.y} $picked={p.picked}>{p.t}</PointLabel>)}
        <path d="M648 288l101 101M749 288L648 389M810 314l101 101M911 314L810 415" stroke="#a52a3c" />
        <path d="M343 442l101 101M444 442L343 543" stroke="#7d1525" strokeWidth="2.500" />
        <path d="M473 394.500h29M508 394.500h28M505.500 363v29M505.500 398v29" stroke="#777" />
        <circle cx="505.500" cy="395" r="2.500" fill="none" stroke="#444" />
        <path d="M218 649.500h45" stroke="#444" />
        <AxisLabel x="222" y="647">Y</AxisLabel>
        <AxisLabel x="266" y="649">X</AxisLabel>
        <path d="M211 170v-4l4-2v4M215 168l4-5M216 170h4v-4" fill="none" stroke="#555" strokeDasharray="2 1" />
      </g>
    </Model>
    <ViewLabel>[−][Top][2D Wireframe]</ViewLabel>
    <ViewButtons>
      {["vMin", "vMax", "vClose"].map((i) => <IconButton key={i} $w={17} aria-label={i}><Icon n={i} s={10} /></IconButton>)}
    </ViewButtons>
    <Cube>
      <span /><span>N</span><span />
      <span>W</span><Top>TOP</Top><span>E</span>
      <span /><span>S</span><span />
    </Cube>
    <Wcs>WCS<svg width="8" height="6"><path d="M0 .5h8L4 5.500z" fill="none" stroke="#b0b4b9" /></svg></Wcs>
    <NavBar>
      <svg width="25" height="171" viewBox="0 0 25 171" fill="none" stroke="#cfcfcf">
        <circle cx="13" cy="24" r="9" /><circle cx="13" cy="24" r="4" />
        <path d="M2 46h21M2 135h21" />
        <path d="M6 62l-2-5 2-1 3 4v-9l2 0 1 7v-9l2 0 1 9 1-8h2v9l2-5 2 1-2 8-3 5h-7z" />
        <path d="M4 73l12 14M15 72L4 86M3 73h3M13 72h3M3 86h3" /><circle cx="17" cy="86" r="4" /><path d="M20 89l4 4" />
        <path d="M13 104v20M9 108l4-5 4 5M9 120l4 5 4-5M4 114q9 6 18 0M4 114l4-3M22 114l-4-3" />
        <path d="M4 138h5v4H4zM11 138h5v4h-5zM18 138h5v4h-5zM4 145h13v13H4zM9 148v7l5-3.500zM19 163h4v4h-4z" />
        <circle cx="21" cy="4" r="2.500" />
      </svg>
    </NavBar>
    <Watermark><strong>Activar Windows</strong>Ve a Configuración para activar Windows.</Watermark>
    <CommandBar>
      <CommandGrip>
        <Dots />
        <IconButton $w={16} aria-label="Close"><Icon n="close" s={9} /></IconButton>
        <IconButton $w={22} aria-label="Customize"><Icon n="wrench" s={13} /></IconButton>
      </CommandGrip>
      <IconButton $w={26} $c="#777" aria-label="Recent commands"><Icon n="prompt" s={13} /><Icon n="down" s={7} /></IconButton>
      <CommandInput aria-label="Command" placeholder="Type a command" />
      <IconButton $w={14} $c="#777" aria-label="History"><Icon n="up" s={7} /></IconButton>
    </CommandBar>
  </Canvas>
);

const TreeItem = ({ node }: { node: Node }) => (
  <TreeRow $bold={node.t === "Drawing1"}>
    {node.l > 0 && <Guide $line={node.trunk} />}
    {node.l > 1 && <Guide $line />}
    <Guide $line={node.l > 0} $tee>
      {node.e && (
        <Expander aria-label={`Toggle ${node.t}`}>
          <svg width="5" height="5"><path d={sign[node.e]} stroke={node.e === "." ? "none" : "currentColor"} fill={node.e === "." ? "currentColor" : "none"} /></svg>
        </Expander>
      )}
    </Guide>
    <TreeIcon><Icon n={node.i} s={11} /></TreeIcon>
    <TreeLabel $on={node.on}>{node.t}</TreeLabel>
  </TreeRow>
);

const Arrow = ({ n: name }: { n: string }) => <button aria-label={name}><Icon n={name} s={9} /></button>;

export default function App() {
  return (
    <Screen>
      <Global />
      <AppWindow>
        <Header>
          <AppButton>
            <svg width="24" height="22" viewBox="0 0 24 22">
              <path d="M16 8V4Q4 1 4 11t12 7v-4" fill="none" stroke="#1d7fa6" strokeWidth="4.500" />
              <path d="M16 4Q5 2 5 11" fill="none" stroke="#64bddc" strokeWidth="3" />
              <path d="M20 14h5l-2.500 3z" fill="#333" />
            </svg>
            C3D
          </AppButton>
          <HeaderRows>
            <TitleRow>
              <QuickBar>
                {["new", "open", "save", "saveAs", "web", "print", "undo"].map((i) => <IconButton key={i} aria-label={i}><Icon n={i} s={14} /></IconButton>)}
                <IconButton $w={8} aria-label="Undo list"><Icon n="down" s={6} /></IconButton>
                <IconButton $w={22} aria-label="Redo"><Icon n="redo" s={13} /></IconButton>
                <IconButton $w={11} aria-label="Redo list"><Icon n="down" s={6} /></IconButton>
              </QuickBar>
              <Workspace>
                <Icon n="gear" s={14} />
                <PlainSelect aria-label="Workspace"><option>Civil 3D</option></PlainSelect>
                <Icon n="down" s={7} />
              </Workspace>
              <IconButton $w={14} aria-label="Customize"><Icon n="downBar" s={7} /></IconButton>
              <Title>{"Autodesk Civil 3D 2020    Drawing1.dwg"}</Title>
              <IconButton $w={14} aria-label="Expand search"><Icon n="right" s={9} /></IconButton>
              <Search aria-label="Search" placeholder="Type a keyword or phrase" />
              <IconButton aria-label="Find"><Icon n="binoc" /></IconButton>
              <User><Icon n="user" s={13} /><span>percylima2010</span></User>
              <IconButton $w={15} aria-label="Account"><Icon n="down" s={6} /></IconButton>
              <IconButton aria-label="Store"><Icon n="cart" /></IconButton>
              <IconButton aria-label="Apps"><Icon n="tri" /></IconButton>
              <IconButton $w={14} aria-label="Apps list"><Icon n="down" s={6} /></IconButton>
              <Rule />
              <IconButton $w={24} aria-label="Help"><Icon n="help" /></IconButton>
              <IconButton $w={12} aria-label="Help list"><Icon n="down" s={6} /></IconButton>
              <WindowButtons>
                {["min", "max", "close"].map((i) => <IconButton key={i} aria-label={i}><Icon n={i} s={11} /></IconButton>)}
              </WindowButtons>
            </TitleRow>
            <RibbonTabs>
              {ribbonTabs.map((t) => <RibbonTab key={t} $on={t === "Insert"}>{t}</RibbonTab>)}
              <RibbonToggle aria-label="Ribbon display"><Icon n="camera" s={13} /><Icon n="down" s={6} /></RibbonToggle>
            </RibbonTabs>
          </HeaderRows>
        </Header>

        <Ribbon>
          <Panel $w={257}>
            <PanelBody>
              <Big w={38} icon="bigImport" lines={["Import"]} />
              <Small w={94} rows={[["landDesktop", "Land Desktop"], ["landXml", "LandXML"], ["pointsFile", "Points from File"]]} />
              <Small w={120} rows={[["storm", "Storm Sewers"], ["survey", "Import Survey Data"], ["subasm", "Import Subassemblies"]]} />
            </PanelBody>
            <PanelTitle>Import <Icon n="down" s={7} /></PanelTitle>
          </Panel>
          <Panel $w={65}>
            <PanelBody><Big w={60} icon="infra" lines={["InfraWorks"]} drop /></PanelBody>
            <PanelTitle>InfraWorks</PanelTitle>
          </Panel>
          <Panel $w={135}>
            <PanelBody>
              <Big w={34} icon="bigInsert" lines={["Insert"]} drop />
              <Small w={96} rows={[["create", "Create"], ["edit", "Edit"], ["attrs", "Edit Attributes", true]]} />
            </PanelBody>
            <PanelTitle>Block <Icon n="down" s={7} /></PanelTitle>
          </Panel>
          <Panel $w={236}>
            <PanelBody>
              <Big w={32} icon="attach" lines={["Attach"]} />
              <Big w={34} icon="clipRef" lines={["Clip"]} />
              <Big w={34} icon="attach" lines={["Adjust"]} />
              <Small w={130} rows={[["under", "Underlay Layers"], ["frames", "*Frames vary*", true], ["snap", "Snap to Underlays ON", true]]} />
            </PanelBody>
            <PanelTitle>Reference <Icon n="down" s={7} /><Launcher aria-label="Reference settings"><Icon n="launcher" s={7} /></Launcher></PanelTitle>
          </Panel>
          <Panel $w={60}>
            <PanelBody><Big w={55} icon="cloud" lines={["Attach"]} /></PanelBody>
            <PanelTitle>Point Cloud</PanelTitle>
          </Panel>
          <Panel $w={122}>
            <PanelBody>
              <Big w={34} icon="field" lines={["Field"]} />
              <Small w={84} rows={[["update", "Update Fields"], ["ole", "OLE Object"], ["hyper", "Hyperlink"]]} />
            </PanelBody>
            <PanelTitle>Data</PanelTitle>
          </Panel>
          <Panel $w={164}>
            <PanelBody>
              <Big w={32} icon="dataLink" lines={["Data", "Link"]} />
              <Small w={126} rows={[["download", "Download from Source"], ["upload", "Upload to Source"], ["extract", "Extract  Data"]]} />
            </PanelBody>
            <PanelTitle>Linking &amp; Extraction</PanelTitle>
          </Panel>
          <Panel $w={58}>
            <PanelBody><Big w={53} icon="globe" lines={["Set", "Location"]} /></PanelBody>
            <PanelTitle>Location</PanelTitle>
          </Panel>
          <Panel $w={83}>
            <PanelBody>
              <Big w={46} icon="pipeIn" lines={["Insert"]} />
              <Big w={24} icon="pipeEdit" lines={["Edit"]} />
            </PanelBody>
            <PanelTitle>Connection Point</PanelTitle>
          </Panel>
        </Ribbon>

        <FileTabs>
          <FileTab $w={103}>Start</FileTab>
          <FileTab $w={103} $on>Drawing1*<button aria-label="Close Drawing1"><Icon n="close" s={9} /></button></FileTab>
          <FileTab $w={103}>Drawing2*<button aria-label="Close Drawing2"><Icon n="close" s={9} /></button></FileTab>
          <FileTab $w={28}><button aria-label="New tab"><Icon n="plus" s={8} /></button></FileTab>
        </FileTabs>

        <Main>
          <Toolspace>
            <ToolHead><span>⁝</span>TOOLSPACE</ToolHead>
            <ToolIcons>
              <IconButton aria-label="Item view"><Icon n="tsNew" s={10} /></IconButton>
              <span />
              <IconButton $w={21} aria-label="Panorama"><Icon n="tsPan" s={11} /></IconButton>
              <IconButton $w={21} aria-label="List"><Icon n="tsList" s={11} /></IconButton>
              <IconButton $w={21} aria-label="Help"><Icon n="tsHelp" s={11} /></IconButton>
            </ToolIcons>
            <ViewSelect>
              <PlainSelect aria-label="View"><option>Active Drawing View</option></PlainSelect>
              <svg width="7" height="5"><path d="M0 0l3.500 4L7 0" fill="none" stroke="#777" /></svg>
            </ViewSelect>
            <TreeBox>
              <Tree>{tree.map((t, i) => <TreeItem key={i} node={t} />)}</Tree>
              <ScrollBar><Arrow n="scUp" /><Thumb $grow={320} /><Gap $grow={30} /><Arrow n="scDown" /></ScrollBar>
            </TreeBox>
            <ListBox>
              <ListTop>
                <ListClip>
                  <List>
                    <colgroup><col width="101" /><col width="52" /><col /></colgroup>
                    <thead><tr><th>Name</th><th>Descript...</th><th>Style</th></tr></thead>
                    <tbody>
                      {["lieca2", "topcon"].map((t) => (
                        <tr key={t}><td><NameCell><Icon n="pgroup" s={11} />{t}</NameCell></td><td /><td>Basic</td></tr>
                      ))}
                    </tbody>
                  </List>
                </ListClip>
                <ScrollBar><Arrow n="scUp" /><Thumb $grow={3} /><Gap $grow={1} /><Arrow n="scDown" /></ScrollBar>
              </ListTop>
              <ScrollBar $row><Arrow n="scLeft" /><Thumb $row $grow={80} /><Gap $grow={58} /><Arrow n="scRight" /><Gap $grow={15} /></ScrollBar>
            </ListBox>
          </Toolspace>
          <SideTabs>
            {["Prospector", "Settings", "Survey", "Toolbox"].map((t) => <SideTab key={t} $on={t === "Prospector"}>{t}</SideTab>)}
          </SideTabs>
          <DrawingArea />
          <SideBar>
            <Dots $row />
            {sideTools.map((group, g) => (
              <React.Fragment key={g}>
                {g > 0 && <Divider />}
                {group.map((i) => <button key={i} aria-label={i}><Icon n={i} s={13} /></button>)}
              </React.Fragment>
            ))}
            <Dots $row />
            {["r14", "r26"].map((i) => <button key={i} aria-label={i}><Icon n={i} s={13} /></button>)}
          </SideBar>
        </Main>

        <Status>
          <LayoutTabs>
            <LayoutTab $w={46} $on>Model</LayoutTab>
            <LayoutTab $w={50}>Layout1</LayoutTab>
            <LayoutTab $w={52}>Layout2</LayoutTab>
            <LayoutTab $w={22} aria-label="New layout"><Icon n="plus" s={8} /></LayoutTab>
          </LayoutTabs>
          {statusCells.map(([id, w, kind]) => (
            <StatusCell key={id} $w={w} $on={kind === "on"} $sep={kind === "sep"} aria-label={id}>
              {kind === "text" ? id : <Icon n={kind === "drop" ? "down" : id} s={kind === "drop" ? 7 : 14} />}
            </StatusCell>
          ))}
        </Status>
      </AppWindow>

      <Taskbar>
        <Start aria-label="Inicio"><Icon n="win" s={14} /></Start>
        <TaskSearch>
          <Icon n="search" s={15} />
          <input aria-label="Buscar" placeholder="Escribe aquí para buscar" />
        </TaskSearch>
        <TaskApps>
          {taskApps.map(([name, icon, open]) => (
            <TaskApp key={name} aria-label={name} $open={open} $on={icon === "civil"}>
              <Icon n={icon} s={icon === "task" ? 14 : 20} />
              {icon === "chrome" && <Profile>P</Profile>}
            </TaskApp>
          ))}
        </TaskApps>
        <Tray>
          {["chevUp", "mic", "batt", "net", "vol"].map((i) => <IconButton key={i} aria-label={i}><Icon n={i} s={i === "chevUp" ? 10 : 14} /></IconButton>)}
          <IconButton $w={34} $c="#f0f0f0">ESP</IconButton>
          <Clock><div>09:53</div><div>12/01/2023</div></Clock>
          <Notice aria-label="Notificaciones"><Icon n="notif" s={15} /><span>2</span></Notice>
        </Tray>
      </Taskbar>
    </Screen>
  );
}
